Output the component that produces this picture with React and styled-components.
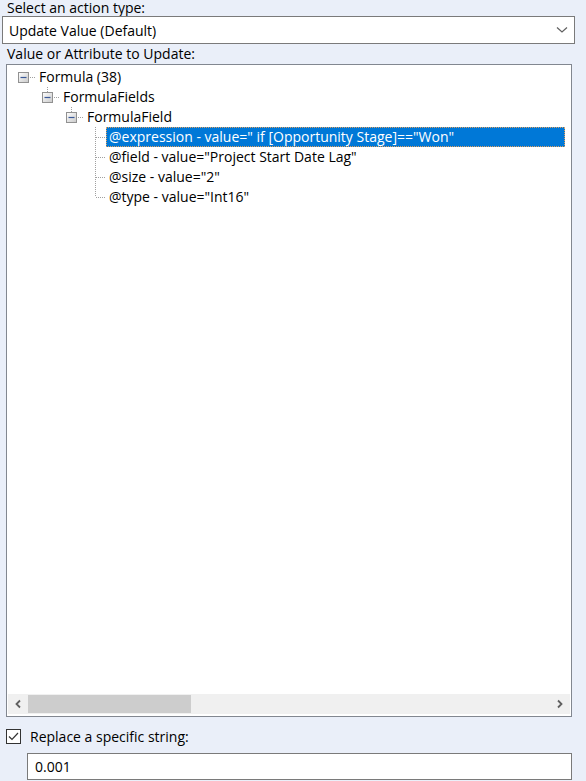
import React from 'react';
import styled, { createGlobalStyle } from 'styled-components';

const GlobalStyle = createGlobalStyle`
  html, body {
    margin: 0;
    padding: 0;
    background: #eaeff9;
  }
  body {
    font-family: "Open Sans", "Noto Sans", sans-serif;
    font-size: 14px;
    color: #000;
  }
`;

const nodes = [
  { level: 0, label: 'Formula (38)', expander: true },
  { level: 1, label: 'FormulaFields', expander: true, up: true },
  { level: 2, label: 'FormulaField', expander: true, up: true },
  { level: 3, label: '@expression - value=" if [Opportunity Stage]=="Won"', up: true, down: true, selected: true },
  { level: 3, label: '@field - value="Project Start Date Lag"', up: true, down: true },
  { level: 3, label: '@size - value="2"', up: true, down: true },
  { level: 3, label: '@type - value="Int16"', up: true },
];

function Connector({ expander, up, down }) {
  return (
    <svg width="24" height="20" viewBox="0 0 24 20">
      {up && <line x1="12.5" y1="0" x2="12.5" y2={expander ? 5 : 10} stroke="#a0a0a0" strokeDasharray="1 1" />}
      {down && <line x1="12.5" y1="10" x2="12.5" y2="20" stroke="#a0a0a0" strokeDasharray="1 1" />}
      {expander ? (
        <>
          <line x1="17" y1="10.5" x2="24" y2="10.5" stroke="#a0a0a0" strokeDasharray="1 1" />
          <defs>
            <linearGradient id="exp" x1="0" y1="0" x2="1" y2="1">
              <stop offset="0" stopColor="#ffffff" />
              <stop offset="1" stopColor="#c9c9c9" />
            </linearGradient>
          </defs>
          <rect x="7.5" y="5.5" width="10" height="10" fill="url(#exp)" stroke="#919191" />
          <line x1="9.5" y1="10.5" x2="15.5" y2="10.5" stroke="#3b5998" strokeWidth="1.2" />
        </>
      ) : (
        <line x1="13" y1="10.5" x2="23" y2="10.5" stroke="#a0a0a0" strokeDasharray="1 1" />
      )}
    </svg>
  );
}

function App() {
  return (
    <Page>
      <GlobalStyle />
      <FieldLabel $top={0}>Select an action type:</FieldLabel>
      <Select>
        <span>Update Value (Default)</span>
        <svg width="12" height="8" viewBox="0 0 12 8">
          <polyline points="1,1.5 6,6 11,1.5" fill="none" stroke="#606060" strokeWidth="1.2" />
        </svg>
      </Select>
      <FieldLabel $top={2}>Value or Attribute to Update:</FieldLabel>
      <TreePanel>
        <TreeList>
          {nodes.map((n, i) => (
            <TreeRow key={i} $level={n.level}>
              <Connector expander={n.expander} up={n.up} down={n.down} />
              <NodeLabel $selected={n.selected} $leaf={!n.expander}>{n.label}</NodeLabel>
            </TreeRow>
          ))}
        </TreeList>
        <HScroll>
          <ScrollArrow>
            <svg width="8" height="10" viewBox="0 0 8 10">
              <polyline points="6,1.5 2.5,5 6,8.5" fill="none" stroke="#606060" strokeWidth="1.8" />
            </svg>
          </ScrollArrow>
          <Track>
            <Thumb />
          </Track>
          <ScrollArrow>
            <svg width="8" height="10" viewBox="0 0 8 10">
              <polyline points="2,1.5 5.5,5 2,8.5" fill="none" stroke="#606060" strokeWidth="1.8" />
            </svg>
          </ScrollArrow>
        </HScroll>
      </TreePanel>
      <CheckRow>
        <CheckBox>
          <svg width="15" height="15" viewBox="0 0 15 15">
            <rect x="0.5" y="0.5" width="14" height="14" fill="#fff" stroke="#333" />
            <polyline points="3,7.5 6,10.5 12,4" fill="none" stroke="#333" strokeWidth="1.2" />
          </svg>
        </CheckBox>
        <span>Replace a specific string:</span>
      </CheckRow>
      <TextInput>0.001</TextInput>
    </Page>
  );
}

export default App;

const Page = styled.div`
  width: 586px;
  height: 781px;
  overflow: hidden;
  background: #eaeff9;
  display: flex;
  flex-direction: column;
`;

const FieldLabel = styled.div`
  height: 16px;
  line-height: 16px;
  margin-top: ${p => p.$top}px;
  padding-left: 7px;
  white-space: nowrap;
`;

const Select = styled.div`
  margin: 0 0 0 2px;
  width: 573px;
  height: 28px;
  box-sizing: border-box;
  border: 1px solid #7a7a7a;
  background: #fff;
  display: flex;
  align-items: center;
  justify-content: space-between;
  padding: 0 6px 0 6px;
`;

const TreePanel = styled.div`
  margin: 2px 0 0 6px;
  width: 566px;
  height: 653px;
  box-sizing: border-box;
  border: 1px solid #828790;
  background: #fff;
  display: flex;
  flex-direction: column;
  padding: 1px 1px 2px 1px;
`;

const TreeList = styled.div`
  flex: 1;
  padding-top: 1px;
`;

const TreeRow = styled.div`
  display: flex;
  align-items: center;
  height: 20px;
  padding-left: ${p => 3 + p.$level * 24}px;
`;

const NodeLabel = styled.span`
  height: 20px;
  line-height: 18px;
  box-sizing: border-box;
  white-space: nowrap;
  padding: 0 ${p => (p.$selected ? 110 : 3)}px 0 2px;
  margin-left: ${p => (p.$leaf ? -1 : 1)}px;
  background: ${p => (p.$selected ? '#0078d7' : 'transparent')};
  color: ${p => (p.$selected ? '#fff' : '#000')};
  border: 1px dotted ${p => (p.$selected ? '#e0a060' : 'transparent')};
`;

const HScroll = styled.div`
  height: 20px;
  background: #f0f0f0;
  display: flex;
  align-items: stretch;
`;

const ScrollArrow = styled.div`
  width: 20px;
  display: flex;
  align-items: center;
  justify-content: center;
`;

const Track = styled.div`
  flex: 1;
  display: flex;
  align-items: center;
`;

const Thumb = styled.div`
  width: 163px;
  height: 18px;
  background: #cdcdcd;
`;

const CheckRow = styled.div`
  display: flex;
  align-items: center;
  gap: 9px;
  margin: 11px 0 0 6px;
  height: 17px;
`;

const CheckBox = styled.span`
  display: flex;
  width: 15px;
  height: 15px;
`;

const TextInput = styled.div`
  margin: 8px 0 0 27px;
  width: 545px;
  height: 27px;
  box-sizing: border-box;
  border: 1px solid #7a7a7a;
  background: #fff;
  padding-left: 7px;
  line-height: 25px;
`;
